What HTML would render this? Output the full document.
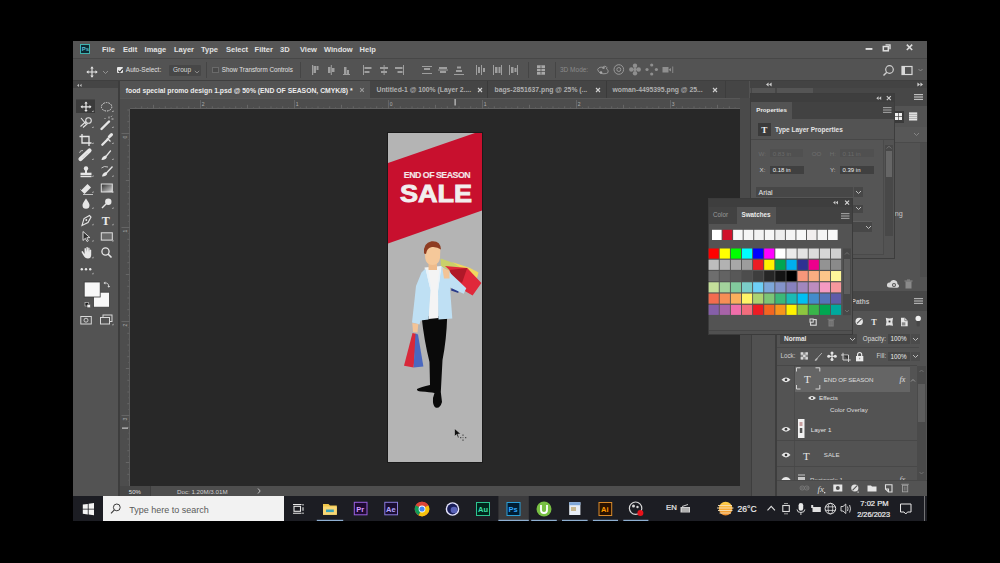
<!DOCTYPE html>
<html><head><meta charset="utf-8">
<style>
*{box-sizing:border-box;margin:0;padding:0}
html,body{width:1000px;height:563px;overflow:hidden;background:#000}
body{position:relative;font-family:"Liberation Sans",sans-serif;color:#e8e8e8}
.a{position:absolute}
.t{position:absolute;white-space:nowrap;line-height:1}
</style></head><body>
<!-- photoshop frame -->
<div class="a" style="left:73px;top:41px;width:854px;height:455px;background:#535353"></div>
<!-- menubar -->
<div class="a" style="left:73px;top:41px;width:854px;height:18px;background:#555"></div>
<div class="a" style="left:73px;top:58px;width:854px;height:1px;background:#474747"></div>
<!-- options bar -->
<div class="a" style="left:73px;top:59px;width:854px;height:21px;background:#535353"></div>
<div class="a" style="left:73px;top:80px;width:854px;height:1px;background:#3f3f3f"></div>
<!-- toolbar -->
<div class="a" style="left:73px;top:81px;width:45px;height:415px;background:#535353"></div>
<div class="a" style="left:73px;top:81px;width:45px;height:7px;background:#454545"></div>
<div class="a" style="left:118px;top:81px;width:2px;height:415px;background:#3d3d3d"></div>
<!-- doc tab bar -->
<div class="a" style="left:120px;top:81px;width:629px;height:17px;background:#454545"></div>
<div class="a" style="left:120px;top:81px;width:250px;height:17px;background:#535353"></div>
<!-- rulers -->
<div class="a" style="left:120px;top:98px;width:10px;height:11px;background:#4d4d4d"></div>
<svg class="a" style="left:120px;top:98px" width="620" height="11" viewBox="120 98 620 11">
<rect x="120" y="98" width="620" height="11" fill="#4d4d4d"/>
<rect x="120" y="98.2" width="620" height="0.8" fill="#5a5a5a"/>
<rect x="130" y="108.2" width="610" height="0.9" fill="#666"/>
<rect x="135.47" y="107" width="0.7" height="1.3" fill="#616161"/>
<rect x="141.35" y="106.3" width="0.8" height="2" fill="#6a6a6a"/>
<rect x="147.22" y="107" width="0.7" height="1.3" fill="#616161"/>
<rect x="153.10" y="104.8" width="0.8" height="3.5" fill="#6e6e6e"/>
<rect x="158.97" y="107" width="0.7" height="1.3" fill="#616161"/>
<rect x="164.85" y="106.3" width="0.8" height="2" fill="#6a6a6a"/>
<rect x="170.72" y="107" width="0.7" height="1.3" fill="#616161"/>
<rect x="176.60" y="106.3" width="0.8" height="2" fill="#6a6a6a"/>
<rect x="182.47" y="107" width="0.7" height="1.3" fill="#616161"/>
<rect x="188.35" y="106.3" width="0.8" height="2" fill="#6a6a6a"/>
<rect x="194.22" y="107" width="0.7" height="1.3" fill="#616161"/>
<rect x="200.10" y="100" width="0.8" height="8.5" fill="#6c6c6c"/>
<text x="201.70" y="106.3" font-size="5" fill="#b0b0b0" font-family="Liberation Sans">2</text>
<rect x="205.97" y="107" width="0.7" height="1.3" fill="#616161"/>
<rect x="211.85" y="106.3" width="0.8" height="2" fill="#6a6a6a"/>
<rect x="217.72" y="107" width="0.7" height="1.3" fill="#616161"/>
<rect x="223.60" y="106.3" width="0.8" height="2" fill="#6a6a6a"/>
<rect x="229.47" y="107" width="0.7" height="1.3" fill="#616161"/>
<rect x="235.35" y="106.3" width="0.8" height="2" fill="#6a6a6a"/>
<rect x="241.22" y="107" width="0.7" height="1.3" fill="#616161"/>
<rect x="247.10" y="104.8" width="0.8" height="3.5" fill="#6e6e6e"/>
<rect x="252.97" y="107" width="0.7" height="1.3" fill="#616161"/>
<rect x="258.85" y="106.3" width="0.8" height="2" fill="#6a6a6a"/>
<rect x="264.73" y="107" width="0.7" height="1.3" fill="#616161"/>
<rect x="270.60" y="106.3" width="0.8" height="2" fill="#6a6a6a"/>
<rect x="276.48" y="107" width="0.7" height="1.3" fill="#616161"/>
<rect x="282.35" y="106.3" width="0.8" height="2" fill="#6a6a6a"/>
<rect x="288.23" y="107" width="0.7" height="1.3" fill="#616161"/>
<rect x="294.10" y="100" width="0.8" height="8.5" fill="#6c6c6c"/>
<text x="295.70" y="106.3" font-size="5" fill="#b0b0b0" font-family="Liberation Sans">1</text>
<rect x="299.98" y="107" width="0.7" height="1.3" fill="#616161"/>
<rect x="305.85" y="106.3" width="0.8" height="2" fill="#6a6a6a"/>
<rect x="311.73" y="107" width="0.7" height="1.3" fill="#616161"/>
<rect x="317.60" y="106.3" width="0.8" height="2" fill="#6a6a6a"/>
<rect x="323.48" y="107" width="0.7" height="1.3" fill="#616161"/>
<rect x="329.35" y="106.3" width="0.8" height="2" fill="#6a6a6a"/>
<rect x="335.23" y="107" width="0.7" height="1.3" fill="#616161"/>
<rect x="341.10" y="104.8" width="0.8" height="3.5" fill="#6e6e6e"/>
<rect x="346.98" y="107" width="0.7" height="1.3" fill="#616161"/>
<rect x="352.85" y="106.3" width="0.8" height="2" fill="#6a6a6a"/>
<rect x="358.73" y="107" width="0.7" height="1.3" fill="#616161"/>
<rect x="364.60" y="106.3" width="0.8" height="2" fill="#6a6a6a"/>
<rect x="370.48" y="107" width="0.7" height="1.3" fill="#616161"/>
<rect x="376.35" y="106.3" width="0.8" height="2" fill="#6a6a6a"/>
<rect x="382.23" y="107" width="0.7" height="1.3" fill="#616161"/>
<rect x="388.10" y="100" width="0.8" height="8.5" fill="#6c6c6c"/>
<text x="389.70" y="106.3" font-size="5" fill="#b0b0b0" font-family="Liberation Sans">0</text>
<rect x="393.98" y="107" width="0.7" height="1.3" fill="#616161"/>
<rect x="399.85" y="106.3" width="0.8" height="2" fill="#6a6a6a"/>
<rect x="405.73" y="107" width="0.7" height="1.3" fill="#616161"/>
<rect x="411.60" y="106.3" width="0.8" height="2" fill="#6a6a6a"/>
<rect x="417.48" y="107" width="0.7" height="1.3" fill="#616161"/>
<rect x="423.35" y="106.3" width="0.8" height="2" fill="#6a6a6a"/>
<rect x="429.23" y="107" width="0.7" height="1.3" fill="#616161"/>
<rect x="435.10" y="104.8" width="0.8" height="3.5" fill="#6e6e6e"/>
<rect x="440.98" y="107" width="0.7" height="1.3" fill="#616161"/>
<rect x="446.85" y="106.3" width="0.8" height="2" fill="#6a6a6a"/>
<rect x="452.73" y="107" width="0.7" height="1.3" fill="#616161"/>
<rect x="458.60" y="106.3" width="0.8" height="2" fill="#6a6a6a"/>
<rect x="464.48" y="107" width="0.7" height="1.3" fill="#616161"/>
<rect x="470.35" y="106.3" width="0.8" height="2" fill="#6a6a6a"/>
<rect x="476.23" y="107" width="0.7" height="1.3" fill="#616161"/>
<rect x="482.10" y="100" width="0.8" height="8.5" fill="#6c6c6c"/>
<text x="483.70" y="106.3" font-size="5" fill="#b0b0b0" font-family="Liberation Sans">1</text>
<rect x="487.98" y="107" width="0.7" height="1.3" fill="#616161"/>
<rect x="493.85" y="106.3" width="0.8" height="2" fill="#6a6a6a"/>
<rect x="499.73" y="107" width="0.7" height="1.3" fill="#616161"/>
<rect x="505.60" y="106.3" width="0.8" height="2" fill="#6a6a6a"/>
<rect x="511.48" y="107" width="0.7" height="1.3" fill="#616161"/>
<rect x="517.35" y="106.3" width="0.8" height="2" fill="#6a6a6a"/>
<rect x="523.23" y="107" width="0.7" height="1.3" fill="#616161"/>
<rect x="529.10" y="104.8" width="0.8" height="3.5" fill="#6e6e6e"/>
<rect x="534.98" y="107" width="0.7" height="1.3" fill="#616161"/>
<rect x="540.85" y="106.3" width="0.8" height="2" fill="#6a6a6a"/>
<rect x="546.73" y="107" width="0.7" height="1.3" fill="#616161"/>
<rect x="552.60" y="106.3" width="0.8" height="2" fill="#6a6a6a"/>
<rect x="558.48" y="107" width="0.7" height="1.3" fill="#616161"/>
<rect x="564.35" y="106.3" width="0.8" height="2" fill="#6a6a6a"/>
<rect x="570.23" y="107" width="0.7" height="1.3" fill="#616161"/>
<rect x="576.10" y="100" width="0.8" height="8.5" fill="#6c6c6c"/>
<text x="577.70" y="106.3" font-size="5" fill="#b0b0b0" font-family="Liberation Sans">2</text>
<rect x="581.98" y="107" width="0.7" height="1.3" fill="#616161"/>
<rect x="587.85" y="106.3" width="0.8" height="2" fill="#6a6a6a"/>
<rect x="593.73" y="107" width="0.7" height="1.3" fill="#616161"/>
<rect x="599.60" y="106.3" width="0.8" height="2" fill="#6a6a6a"/>
<rect x="605.48" y="107" width="0.7" height="1.3" fill="#616161"/>
<rect x="611.35" y="106.3" width="0.8" height="2" fill="#6a6a6a"/>
<rect x="617.23" y="107" width="0.7" height="1.3" fill="#616161"/>
<rect x="623.10" y="104.8" width="0.8" height="3.5" fill="#6e6e6e"/>
<rect x="628.98" y="107" width="0.7" height="1.3" fill="#616161"/>
<rect x="634.85" y="106.3" width="0.8" height="2" fill="#6a6a6a"/>
<rect x="640.73" y="107" width="0.7" height="1.3" fill="#616161"/>
<rect x="646.60" y="106.3" width="0.8" height="2" fill="#6a6a6a"/>
<rect x="652.48" y="107" width="0.7" height="1.3" fill="#616161"/>
<rect x="658.35" y="106.3" width="0.8" height="2" fill="#6a6a6a"/>
<rect x="664.23" y="107" width="0.7" height="1.3" fill="#616161"/>
<rect x="670.10" y="100" width="0.8" height="8.5" fill="#6c6c6c"/>
<text x="671.70" y="106.3" font-size="5" fill="#b0b0b0" font-family="Liberation Sans">3</text>
<rect x="675.98" y="107" width="0.7" height="1.3" fill="#616161"/>
<rect x="681.85" y="106.3" width="0.8" height="2" fill="#6a6a6a"/>
<rect x="687.73" y="107" width="0.7" height="1.3" fill="#616161"/>
<rect x="693.60" y="106.3" width="0.8" height="2" fill="#6a6a6a"/>
<rect x="699.48" y="107" width="0.7" height="1.3" fill="#616161"/>
<rect x="705.35" y="106.3" width="0.8" height="2" fill="#6a6a6a"/>
<rect x="711.23" y="107" width="0.7" height="1.3" fill="#616161"/>
<rect x="717.10" y="104.8" width="0.8" height="3.5" fill="#6e6e6e"/>
<rect x="722.98" y="107" width="0.7" height="1.3" fill="#616161"/>
<rect x="728.85" y="106.3" width="0.8" height="2" fill="#6a6a6a"/>
<rect x="734.73" y="107" width="0.7" height="1.3" fill="#616161"/>
<rect x="454.6" y="99" width="1" height="6.5" fill="#e0e0e0"/>
</svg>
<svg class="a" style="left:120px;top:109px" width="10" height="377" viewBox="120 109 10 377">
<rect x="120" y="109" width="10" height="377" fill="#4d4d4d"/>
<rect x="129.2" y="109" width="0.8" height="377" fill="#636363"/>
<rect x="127.3" y="109.60" width="2" height="0.8" fill="#6a6a6a"/>
<rect x="128" y="115.53" width="1.3" height="0.7" fill="#616161"/>
<rect x="127.3" y="121.35" width="2" height="0.8" fill="#6a6a6a"/>
<rect x="128" y="127.28" width="1.3" height="0.7" fill="#616161"/>
<rect x="121.5" y="133.10" width="8" height="0.8" fill="#6c6c6c"/>
<text x="0" y="0" font-size="5" fill="#b0b0b0" font-family="Liberation Sans" transform="translate(126.5 135.50) rotate(-90) translate(-3 0)">0</text>
<rect x="128" y="139.03" width="1.3" height="0.7" fill="#616161"/>
<rect x="127.3" y="144.85" width="2" height="0.8" fill="#6a6a6a"/>
<rect x="128" y="150.78" width="1.3" height="0.7" fill="#616161"/>
<rect x="127.3" y="156.60" width="2" height="0.8" fill="#6a6a6a"/>
<rect x="128" y="162.53" width="1.3" height="0.7" fill="#616161"/>
<rect x="127.3" y="168.35" width="2" height="0.8" fill="#6a6a6a"/>
<rect x="128" y="174.28" width="1.3" height="0.7" fill="#616161"/>
<rect x="125.8" y="180.10" width="3.5" height="0.8" fill="#6e6e6e"/>
<rect x="128" y="186.03" width="1.3" height="0.7" fill="#616161"/>
<rect x="127.3" y="191.85" width="2" height="0.8" fill="#6a6a6a"/>
<rect x="128" y="197.78" width="1.3" height="0.7" fill="#616161"/>
<rect x="127.3" y="203.60" width="2" height="0.8" fill="#6a6a6a"/>
<rect x="128" y="209.53" width="1.3" height="0.7" fill="#616161"/>
<rect x="127.3" y="215.35" width="2" height="0.8" fill="#6a6a6a"/>
<rect x="128" y="221.28" width="1.3" height="0.7" fill="#616161"/>
<rect x="121.5" y="227.10" width="8" height="0.8" fill="#6c6c6c"/>
<text x="0" y="0" font-size="5" fill="#b0b0b0" font-family="Liberation Sans" transform="translate(126.5 229.50) rotate(-90) translate(-3 0)">1</text>
<rect x="128" y="233.03" width="1.3" height="0.7" fill="#616161"/>
<rect x="127.3" y="238.85" width="2" height="0.8" fill="#6a6a6a"/>
<rect x="128" y="244.78" width="1.3" height="0.7" fill="#616161"/>
<rect x="127.3" y="250.60" width="2" height="0.8" fill="#6a6a6a"/>
<rect x="128" y="256.52" width="1.3" height="0.7" fill="#616161"/>
<rect x="127.3" y="262.35" width="2" height="0.8" fill="#6a6a6a"/>
<rect x="128" y="268.27" width="1.3" height="0.7" fill="#616161"/>
<rect x="125.8" y="274.10" width="3.5" height="0.8" fill="#6e6e6e"/>
<rect x="128" y="280.02" width="1.3" height="0.7" fill="#616161"/>
<rect x="127.3" y="285.85" width="2" height="0.8" fill="#6a6a6a"/>
<rect x="128" y="291.77" width="1.3" height="0.7" fill="#616161"/>
<rect x="127.3" y="297.60" width="2" height="0.8" fill="#6a6a6a"/>
<rect x="128" y="303.52" width="1.3" height="0.7" fill="#616161"/>
<rect x="127.3" y="309.35" width="2" height="0.8" fill="#6a6a6a"/>
<rect x="128" y="315.27" width="1.3" height="0.7" fill="#616161"/>
<rect x="121.5" y="321.10" width="8" height="0.8" fill="#6c6c6c"/>
<text x="0" y="0" font-size="5" fill="#b0b0b0" font-family="Liberation Sans" transform="translate(126.5 323.50) rotate(-90) translate(-3 0)">2</text>
<rect x="128" y="327.02" width="1.3" height="0.7" fill="#616161"/>
<rect x="127.3" y="332.85" width="2" height="0.8" fill="#6a6a6a"/>
<rect x="128" y="338.77" width="1.3" height="0.7" fill="#616161"/>
<rect x="127.3" y="344.60" width="2" height="0.8" fill="#6a6a6a"/>
<rect x="128" y="350.52" width="1.3" height="0.7" fill="#616161"/>
<rect x="127.3" y="356.35" width="2" height="0.8" fill="#6a6a6a"/>
<rect x="128" y="362.27" width="1.3" height="0.7" fill="#616161"/>
<rect x="125.8" y="368.10" width="3.5" height="0.8" fill="#6e6e6e"/>
<rect x="128" y="374.02" width="1.3" height="0.7" fill="#616161"/>
<rect x="127.3" y="379.85" width="2" height="0.8" fill="#6a6a6a"/>
<rect x="128" y="385.77" width="1.3" height="0.7" fill="#616161"/>
<rect x="127.3" y="391.60" width="2" height="0.8" fill="#6a6a6a"/>
<rect x="128" y="397.52" width="1.3" height="0.7" fill="#616161"/>
<rect x="127.3" y="403.35" width="2" height="0.8" fill="#6a6a6a"/>
<rect x="128" y="409.27" width="1.3" height="0.7" fill="#616161"/>
<rect x="121.5" y="415.10" width="8" height="0.8" fill="#6c6c6c"/>
<text x="0" y="0" font-size="5" fill="#b0b0b0" font-family="Liberation Sans" transform="translate(126.5 417.50) rotate(-90) translate(-3 0)">3</text>
<rect x="128" y="421.02" width="1.3" height="0.7" fill="#616161"/>
<rect x="127.3" y="426.85" width="2" height="0.8" fill="#6a6a6a"/>
<rect x="128" y="432.77" width="1.3" height="0.7" fill="#616161"/>
<rect x="127.3" y="438.60" width="2" height="0.8" fill="#6a6a6a"/>
<rect x="128" y="444.52" width="1.3" height="0.7" fill="#616161"/>
<rect x="127.3" y="450.35" width="2" height="0.8" fill="#6a6a6a"/>
<rect x="128" y="456.27" width="1.3" height="0.7" fill="#616161"/>
<rect x="125.8" y="462.10" width="3.5" height="0.8" fill="#6e6e6e"/>
<rect x="128" y="468.02" width="1.3" height="0.7" fill="#616161"/>
<rect x="127.3" y="473.85" width="2" height="0.8" fill="#6a6a6a"/>
<rect x="128" y="479.77" width="1.3" height="0.7" fill="#616161"/>
<rect x="122" y="427.6" width="6" height="1" fill="#e0e0e0"/>
</svg>
<!-- pasteboard -->
<div class="a" style="left:130px;top:109px;width:610px;height:377px;background:#282828"></div>
<!-- vertical scrollbar -->
<div class="a" style="left:740px;top:98px;width:11px;height:398px;background:#4a4a4a"></div>
<!-- status bar -->
<div class="a" style="left:120px;top:486px;width:620px;height:10px;background:#4e4e4e"></div>
<div class="a" style="left:120px;top:486px;width:30px;height:10px;background:#474747"></div>
<!-- dock column -->
<div class="a" style="left:751px;top:81px;width:176px;height:415px;background:#535353"></div>
<div class="a" style="left:751px;top:290px;width:25px;height:206px;background:#515151;border-left:1px solid #3e3e3e;border-right:1px solid #3e3e3e"></div>

<!-- ===== MENUBAR CONTENT ===== -->
<div class="a" style="left:80px;top:44.4px;width:10px;height:9.4px;background:#0b2a33;border:1px solid #3fb3b0"></div>
<div class="t" style="left:81.7px;top:46.1px;font-size:6px;font-weight:bold;color:#5cc0d8">Ps</div>
<div class="t" style="left:102.0px;top:46.4px;font-size:7.5px;font-weight:bold;color:#e2e2e2">File</div>
<div class="t" style="left:123.0px;top:46.4px;font-size:7.5px;font-weight:bold;color:#e2e2e2">Edit</div>
<div class="t" style="left:144.6px;top:46.4px;font-size:7.5px;font-weight:bold;color:#e2e2e2">Image</div>
<div class="t" style="left:174.0px;top:46.4px;font-size:7.5px;font-weight:bold;color:#e2e2e2">Layer</div>
<div class="t" style="left:201.0px;top:46.4px;font-size:7.5px;font-weight:bold;color:#e2e2e2">Type</div>
<div class="t" style="left:226.0px;top:46.4px;font-size:7.5px;font-weight:bold;color:#e2e2e2">Select</div>
<div class="t" style="left:254.6px;top:46.4px;font-size:7.5px;font-weight:bold;color:#e2e2e2">Filter</div>
<div class="t" style="left:280.0px;top:46.4px;font-size:7.5px;font-weight:bold;color:#e2e2e2">3D</div>
<div class="t" style="left:300.0px;top:46.4px;font-size:7.5px;font-weight:bold;color:#e2e2e2">View</div>
<div class="t" style="left:324.0px;top:46.4px;font-size:7.5px;font-weight:bold;color:#e2e2e2">Window</div>
<div class="t" style="left:359.6px;top:46.4px;font-size:7.5px;font-weight:bold;color:#e2e2e2">Help</div>
<svg class="a" style="left:860px;top:41px" width="67" height="18" viewBox="860 41 67 18">
  <rect x="865.6" y="48" width="6.8" height="1.9" fill="#dedede"/>
  <rect x="883.3" y="46.5" width="5" height="4.3" fill="none" stroke="#dedede" stroke-width="1.5"/>
  <path d="M885.5 44.9 H890 V49.2" fill="none" stroke="#dedede" stroke-width="1.4"/>
  <path d="M906.8 44.6 L912.2 50 M912.2 44.6 L906.8 50" stroke="#dedede" stroke-width="1.5"/>
</svg>
<!-- ===== OPTIONS BAR CONTENT ===== -->
<svg class="a" style="left:86px;top:65.5px" width="12" height="12" viewBox="0 0 12 12">
  <path d="M6 1.5 V10.5 M1.5 6 H10.5" stroke="#e6e6e6" stroke-width="1.1"/>
  <path d="M6 0.3 L4.3 2.5 H7.7 Z M6 11.7 L4.3 9.5 H7.7 Z M0.3 6 L2.5 4.3 V7.7 Z M11.7 6 L9.5 4.3 V7.7 Z" fill="#e6e6e6"/>
</svg>
<svg class="a" style="left:102px;top:69.5px" width="7" height="5" viewBox="0 0 7 5"><path d="M1 1 L3.5 3.5 L6 1" fill="none" stroke="#9a9a9a" stroke-width="0.9"/></svg>
<div class="a" style="left:116.5px;top:66.5px;width:6.5px;height:6.5px;background:#e8e8e8;border-radius:1px"></div>
<svg class="a" style="left:116.5px;top:66.5px" width="7" height="7" viewBox="0 0 7 7"><path d="M1.3 3.6 L2.9 5.2 L5.8 1.6" fill="none" stroke="#333" stroke-width="1.2"/></svg>
<div class="t" style="left:125.8px;top:67.4px;font-size:6.5px;color:#e0e0e0">Auto-Select:</div>
<div class="a" style="left:169px;top:65.2px;width:32px;height:10.4px;background:#474747;border-radius:1px"></div>
<div class="t" style="left:173px;top:67.3px;font-size:6.5px;color:#d8d8d8">Group</div>
<svg class="a" style="left:193.5px;top:69.5px" width="6" height="4" viewBox="0 0 6 4"><path d="M0.8 0.8 L3 3 L5.2 0.8" fill="none" stroke="#9a9a9a" stroke-width="0.8"/></svg>
<div class="a" style="left:206.3px;top:62px;width:1px;height:16px;background:#454545"></div>
<div class="a" style="left:212.3px;top:67px;width:6.3px;height:6.3px;border:1px solid #6a6a6a;background:#4a4a4a"></div>
<div class="t" style="left:221.8px;top:67.2px;font-size:6.3px;color:#e0e0e0">Show Transform Controls</div>
<div class="a" style="left:300px;top:62px;width:1px;height:16px;background:#454545"></div>
<svg class="a" style="left:305px;top:63px" width="380" height="14" viewBox="305 63 380 14" fill="#9e9e9e">
  <!-- align top/vcenter/bottom -->
  <rect x="312" y="65" width="1.2" height="10"/><rect x="313.5" y="66" width="2.5" height="7"/><rect x="316.5" y="66" width="2" height="4"/>
  <rect x="328" y="67" width="2.5" height="6"/><rect x="330.8" y="65" width="1" height="10"/><rect x="332" y="68" width="2.5" height="4"/>
  <rect x="344" y="67" width="2.5" height="7"/><rect x="347" y="70" width="2" height="4"/><rect x="343" y="74" width="7" height="1"/>
  <rect x="363" y="65" width="1" height="10"/><rect x="364.5" y="67" width="7" height="2"/><rect x="364.5" y="71" width="5" height="2"/>
  <rect x="383.6" y="65" width="1" height="10"/><rect x="380" y="67" width="8" height="2"/><rect x="381" y="71" width="6" height="2"/>
  <rect x="403" y="65" width="1" height="10"/><rect x="395" y="67" width="7.5" height="2"/><rect x="397.5" y="71" width="5" height="2"/>
  <rect x="422" y="66" width="10" height="1"/><rect x="424" y="68" width="6" height="2"/><rect x="422" y="73" width="10" height="1"/>
  <rect x="438" y="69.5" width="10" height="1"/><rect x="439" y="67" width="8" height="2"/><rect x="440" y="71" width="6" height="2"/>
  <rect x="454" y="74" width="10" height="1"/><rect x="456" y="70" width="6" height="2"/><rect x="457" y="66.5" width="4" height="2"/>
  <rect x="476" y="65" width="1" height="10"/><rect x="478" y="67" width="2" height="6"/><rect x="481" y="65" width="1" height="10"/><rect x="483" y="68" width="2" height="4"/>
  <rect x="493" y="65" width="1" height="10"/><rect x="495" y="67" width="2.5" height="6"/><rect x="498.5" y="67" width="2" height="6"/><rect x="501" y="65" width="1" height="10"/>
  <rect x="509" y="65" width="1" height="10"/><rect x="511" y="67" width="2.5" height="6"/><rect x="514.5" y="68" width="2" height="4"/><rect x="517" y="65" width="1" height="10"/>
  <rect x="537" y="65.5" width="8" height="9"/>
</svg>
<div class="a" style="left:528px;top:62px;width:1px;height:16px;background:#454545"></div>
<div class="a" style="left:555px;top:62px;width:1px;height:16px;background:#454545"></div>
<svg class="a" style="left:536px;top:65px" width="10" height="10" viewBox="0 0 10 10"><rect x="1" y="0.5" width="8" height="9" fill="#a8a8a8"/><path d="M1 3.5 H9 M1 6.5 H9 M5 0.5 V9.5" stroke="#535353" stroke-width="0.8"/></svg>
<div class="t" style="left:560px;top:66.5px;font-size:6.5px;color:#8a8a8a">3D Mode:</div>
<svg class="a" style="left:594px;top:63px" width="82" height="14" viewBox="594 63 82 14">
  <g fill="none" stroke="#999" stroke-width="1">
    <path d="M598.5 71.5 Q596.5 69 599 67.8 Q601 66.5 603 67.5 Q604 65.6 606 66.5 Q607.5 67.5 606.5 69 Q609 70 608 72.5 Q607 74 603 73.8 Q600 73.5 598.5 71.5 Z"/>
    <circle cx="618.8" cy="69.5" r="4.8"/><circle cx="618.8" cy="69.5" r="2"/>
  </g>
  <circle cx="601" cy="72.5" r="1.3" fill="#aaa"/><circle cx="603.5" cy="67.8" r="1.3" fill="#999"/>
  <g fill="#8f8f8f">
    <circle cx="635" cy="65.8" r="2.2"/><circle cx="635" cy="73.2" r="2.2"/><circle cx="631.3" cy="69.5" r="2.2"/><circle cx="638.7" cy="69.5" r="2.2"/><circle cx="635" cy="69.5" r="1.8"/>
    <circle cx="651.7" cy="65" r="1.6"/><circle cx="651.7" cy="74" r="1.6"/><circle cx="647" cy="69.5" r="1.6"/><circle cx="656.4" cy="69.5" r="1.6"/>
    <rect x="662.5" y="67" width="6" height="5.5"/><path d="M668.5 69.8 L671 68 V71.6 Z"/><rect x="672.3" y="66.5" width="0.9" height="6.5"/>
  </g>
</svg>
<svg class="a" style="left:882px;top:64px" width="45" height="14" viewBox="882 64 45 14">
  <circle cx="889.5" cy="69.5" r="3.8" fill="none" stroke="#cfcfcf" stroke-width="1.2"/>
  <path d="M886.8 72.2 L883.5 75.5" stroke="#cfcfcf" stroke-width="1.4"/>
  <rect x="902" y="66.5" width="10" height="8" fill="none" stroke="#d8d8d8" stroke-width="1.2"/>
  <rect x="902" y="66.5" width="3" height="8" fill="#d8d8d8"/>
  <path d="M918.5 69 L920.5 71 L922.5 69" fill="none" stroke="#9a9a9a" stroke-width="0.8"/>
</svg>
<!-- ===== DOC TABS ===== -->
<div class="t" style="left:125.8px;top:87.6px;font-size:6.8px;font-weight:bold;color:#ececec">food special promo design 1.psd @ 50% (END OF SEASON, CMYK/8) *</div>
<svg class="a" style="left:359px;top:87px" width="6" height="6" viewBox="0 0 6 6"><path d="M1.2 1.2 L4.8 4.8 M4.8 1.2 L1.2 4.8" stroke="#9a9a9a" stroke-width="1.1"/></svg>
<div class="t" style="left:376.5px;top:87.4px;font-size:6.8px;font-weight:bold;color:#b0b0b0">Untitled-1 @ 100% (Layer 2....</div>
<svg class="a" style="left:476.5px;top:86.5px" width="6" height="6" viewBox="0 0 6 6"><path d="M1 1 L5 5 M5 1 L1 5" stroke="#d0d0d0" stroke-width="1.1"/></svg>
<div class="a" style="left:487px;top:81px;width:1px;height:17px;background:#3a3a3a"></div>
<div class="t" style="left:494.5px;top:87.4px;font-size:6.8px;font-weight:bold;color:#b0b0b0">bags-2851637.png @ 25% (...</div>
<svg class="a" style="left:594.5px;top:86.5px" width="6" height="6" viewBox="0 0 6 6"><path d="M1 1 L5 5 M5 1 L1 5" stroke="#d0d0d0" stroke-width="1.1"/></svg>
<div class="a" style="left:606px;top:81px;width:1px;height:17px;background:#3a3a3a"></div>
<div class="t" style="left:612.5px;top:87.4px;font-size:6.8px;font-weight:bold;color:#b0b0b0">woman-4495395.png @ 25...</div>
<svg class="a" style="left:712px;top:86.5px" width="6" height="6" viewBox="0 0 6 6"><path d="M1 1 L5 5 M5 1 L1 5" stroke="#d0d0d0" stroke-width="1.1"/></svg>
<div class="a" style="left:724.5px;top:81px;width:1px;height:17px;background:#3d3d3d"></div>

<!-- ===== TOOLBAR ICONS ===== -->
<svg class="a" style="left:73px;top:81px" width="45" height="250" viewBox="73 81 45 250">
  <path d="M79 83.8 L77 85.4 L79 87 Z M81.6 83.8 L79.6 85.4 L81.6 87 Z" fill="#b8b8b8"/>
  <rect x="76" y="99.5" width="19" height="13.5" fill="#3b3b3b"/>
  <g fill="#e8e8e8" stroke="#e8e8e8">
    <path d="M86 102.5 V111 M81.5 106.8 H90.5" stroke-width="1.2"/>
    <path d="M86 101.5 L84.3 103.5 H87.7 Z M86 112 L84.3 110 H87.7 Z M80.5 106.8 L82.5 105.1 V108.5 Z M91.5 106.8 L89.5 105.1 V108.5 Z" stroke="none"/>
  </g>
  <ellipse cx="106.6" cy="106.8" rx="5.2" ry="4.2" fill="none" stroke="#dcdcdc" stroke-width="1" stroke-dasharray="1.6 1"/>
  <!-- tiny triangles -->
  <g fill="#bdbdbd">
    <path d="M93.5 110.3 V112 H91.8 Z M113.5 110.3 V112 H111.8 Z"/>
    <path d="M93.5 126.3 V128 H91.8 Z M113.5 126.3 V128 H111.8 Z"/>
    <path d="M93.5 142.3 V144 H91.8 Z M113.5 142.3 V144 H111.8 Z"/>
    <path d="M93.5 158.3 V160 H91.8 Z M113.5 158.3 V160 H111.8 Z"/>
    <path d="M93.5 175 V176.7 H91.8 Z M113.5 175 V176.7 H111.8 Z"/>
    <path d="M93.5 191 V192.7 H91.8 Z M113.5 191 V192.7 H111.8 Z"/>
    <path d="M93.5 207 V208.7 H91.8 Z M113.5 207 V208.7 H111.8 Z"/>
    <path d="M93.5 223.5 V225.2 H91.8 Z M113.5 223.5 V225.2 H111.8 Z"/>
    <path d="M93.5 239.8 V241.5 H91.8 Z M113.5 239.8 V241.5 H111.8 Z"/>
    <path d="M93.5 256.5 V258.2 H91.8 Z"/>
    <path d="M93.5 272.5 V274.2 H91.8 Z"/>
    <path d="M113.5 323.5 V325.2 H111.8 Z"/>
  </g>
  <!-- quick selection -->
  <g fill="none" stroke="#e0e0e0" stroke-width="1.1">
    <circle cx="88.5" cy="120.5" r="2.8"/>
    <path d="M81 118 L86 124 M80.5 126.5 L86 121.5 M83 127.5 L87.5 123.5"/>
  </g>
  <!-- magic wand -->
  <path d="M101.5 129 L109 121.5" stroke="#e6e6e6" stroke-width="2.4" stroke-linecap="round"/>
  <path d="M109 116.5 V118.5 M111.5 119 H113.5 M104.5 118 L105.5 119 M112 115.8 L111 116.8" stroke="#cfcfcf" stroke-width="0.9"/>
  <!-- crop -->
  <path d="M82 134 V143 H91.5 M79.5 136.5 H89 V146" fill="none" stroke="#e8e8e8" stroke-width="1.3"/>
  <!-- eyedropper -->
  <path d="M102.3 144.8 L108 139" stroke="#e6e6e6" stroke-width="2.3" stroke-linecap="round"/>
  <path d="M107 138 L110.5 141.5" stroke="#e6e6e6" stroke-width="1.3"/>
  <path d="M109.3 136.8 L111.5 134.6" stroke="#e6e6e6" stroke-width="3" stroke-linecap="round"/>
  <!-- healing band-aid -->
  <path d="M80.5 159 L89.5 150.5" stroke="#e6e6e6" stroke-width="4.2" stroke-linecap="round"/>
  <path d="M83 157.5 L87 153.5" stroke="#999" stroke-width="0.8" stroke-dasharray="0.8 0.8"/>
  <path d="M79.5 153 Q80 150 83 150.5" fill="none" stroke="#cfcfcf" stroke-width="0.8"/>
  <!-- brush -->
  <path d="M110.8 150.5 L105.5 157" stroke="#e6e6e6" stroke-width="1.2"/>
  <path d="M105.8 155.5 Q102 156 101.5 160 Q105.5 160.3 106.8 157.3 Z" fill="#e6e6e6"/>
  <!-- stamp -->
  <g fill="#e8e8e8"><circle cx="86" cy="168.5" r="2.2"/><rect x="85" y="169.5" width="2" height="3.5"/><rect x="80.5" y="172.7" width="11" height="2.6"/><rect x="80.5" y="176" width="11" height="1.2"/></g>
  <!-- history brush -->
  <path d="M112.5 166.5 L106 173.5" stroke="#e6e6e6" stroke-width="1.3"/>
  <path d="M106.3 172 Q102.5 172.5 102 176.5 Q106 176.8 107.3 173.8 Z" fill="#e6e6e6"/>
  <path d="M101.5 168 Q104 165.5 108 167" fill="none" stroke="#cfcfcf" stroke-width="0.9"/>
  <!-- eraser -->
  <path d="M81 190.5 L87.5 184 L91 187.5 L84.5 194 Z" fill="#e6e6e6"/>
  <path d="M80.5 189.5 L84 193 M83 194.5 H93" fill="none" stroke="#cfcfcf" stroke-width="0.9"/>
  <!-- gradient -->
  <defs><linearGradient id="gr" x1="0" y1="0" x2="1" y2="1"><stop offset="0" stop-color="#2a2a2a"/><stop offset="1" stop-color="#d8d8d8"/></linearGradient></defs>
  <rect x="101.3" y="184" width="11" height="8" fill="url(#gr)" stroke="#e0e0e0" stroke-width="1"/>
  <!-- blur drop -->
  <path d="M86 198.5 Q82.3 203.8 82.5 205.3 A3.5 3.5 0 0 0 89.5 205.3 Q89.7 203.8 86 198.5 Z" fill="#e6e6e6"/>
  <!-- dodge -->
  <circle cx="108.3" cy="201.8" r="3.2" fill="#e6e6e6"/>
  <path d="M106 204 L102 208" stroke="#e6e6e6" stroke-width="1.4"/>
  <!-- pen -->
  <path d="M82 225.5 L84 218.5 L89.5 215.5 L91 217 L88 222.5 Z" fill="none" stroke="#e6e6e6" stroke-width="1.1"/>
  <circle cx="86.3" cy="220" r="0.9" fill="#e6e6e6"/>
  <!-- type T -->
  <text x="101.8" y="224.8" font-family="Liberation Serif" font-weight="bold" font-size="12" fill="#eaeaea">T</text>
  <!-- path selection -->
  <path d="M83 231.5 L83 240.5 L85.3 238.3 L87 241.5 L88.3 240.8 L86.8 237.8 L89.8 237.5 Z" fill="#2e2e2e" stroke="#e6e6e6" stroke-width="0.9"/>
  <!-- rectangle -->
  <rect x="101.3" y="232.8" width="11" height="7.3" fill="#6a6a6a" stroke="#e0e0e0" stroke-width="1"/>
  <!-- hand -->
  <path d="M81.5 252 L83.5 255.5 Q85 258.5 88 258.5 Q91 258.5 91.2 255 L91.2 250 Q90.5 249.2 89.8 250 L89.8 252.5 L89.5 248 Q88.8 247.2 88.2 248 L88.2 252 L87.8 247.3 Q87 246.5 86.4 247.3 L86.5 252 L85.8 248.3 Q85 247.5 84.5 248.5 L84.6 254 L82.8 251.2 Q81.8 250.8 81.5 252 Z" fill="#e8e8e8"/>
  <!-- zoom -->
  <circle cx="105.5" cy="251.5" r="3.6" fill="none" stroke="#e6e6e6" stroke-width="1.3"/>
  <path d="M108 254 L111.5 257.5" stroke="#e6e6e6" stroke-width="1.6"/>
  <!-- dots -->
  <circle cx="81.8" cy="269.2" r="1.2" fill="#e6e6e6"/><circle cx="86" cy="269.2" r="1.2" fill="#e6e6e6"/><circle cx="90.2" cy="269.2" r="1.2" fill="#e6e6e6"/>
  <!-- colors -->
  <rect x="93.5" y="292.2" width="16" height="15" fill="#f7f7f7" stroke="#3a3a3a" stroke-width="0.8"/>
  <rect x="84.2" y="282" width="16" height="15" fill="#f7f7f7" stroke="#3a3a3a" stroke-width="0.8"/>
  <path d="M104.8 283 Q108.5 282.5 108.8 286.5" fill="none" stroke="#d8d8d8" stroke-width="0.9"/>
  <path d="M103.5 283 L105.3 281.6 V284.4 Z M108.8 287.8 L107.4 286 H110.2 Z" fill="#d8d8d8"/>
  <rect x="85" y="302.5" width="3.5" height="3.5" fill="#1e1e1e" stroke="#d0d0d0" stroke-width="0.6"/>
  <rect x="87" y="304.3" width="3.5" height="3.5" fill="#f0f0f0" stroke="#333" stroke-width="0.5"/>
  <!-- quick mask & screen mode -->
  <rect x="80.8" y="316.5" width="10.5" height="7.5" fill="none" stroke="#d8d8d8" stroke-width="1"/>
  <circle cx="86" cy="320.2" r="2" fill="none" stroke="#d8d8d8" stroke-width="0.9"/>
  <rect x="103" y="315" width="9" height="6.5" fill="#535353" stroke="#d8d8d8" stroke-width="1"/>
  <rect x="100.5" y="317.5" width="9" height="6.5" fill="#535353" stroke="#d8d8d8" stroke-width="1"/>
</svg>

<!-- ===== DOCK ===== -->
<div class="a" style="left:749.5px;top:81px;width:177.5px;height:7px;background:#434343"></div>
<svg class="a" style="left:765px;top:82px" width="8" height="5" viewBox="0 0 8 5"><path d="M3.6 0.6 L1 2.5 L3.6 4.4 Z M6.6 0.6 L4 2.5 L6.6 4.4 Z" fill="#d0d0d0"/></svg>
<svg class="a" style="left:916px;top:82px" width="8" height="5" viewBox="0 0 8 5"><path d="M1.4 0.6 L4 2.5 L1.4 4.4 Z M4.4 0.6 L7 2.5 L4.4 4.4 Z" fill="#d0d0d0"/></svg>
<!-- libraries panel (docked, mostly covered) -->
<div class="a" style="left:751px;top:88px;width:25px;height:8px;background:#474747"></div>
<div class="a" style="left:776px;top:88px;width:151px;height:17.6px;background:#474747"></div>
<div class="a" style="left:752px;top:88px;width:23px;height:4.6px;background:#555"></div>
<div class="a" style="left:777px;top:88px;width:36px;height:4.6px;background:#555"></div>
<svg class="a" style="left:913px;top:93px" width="12" height="8" viewBox="0 0 12 8"><rect x="1" y="1" width="9" height="1.2" fill="#c0c0c0"/><rect x="1" y="3.4" width="9" height="1.2" fill="#c0c0c0"/><rect x="1" y="5.8" width="9" height="1.2" fill="#c0c0c0"/></svg>
<div class="a" style="left:893.5px;top:110.5px;width:10px;height:12.8px;background:#3a3a3a"></div>
<svg class="a" style="left:893px;top:110px" width="30" height="14" viewBox="893 110 30 14">
  <rect x="895" y="113" width="3.2" height="3.2" fill="#f0f0f0"/><rect x="898.8" y="113" width="3.2" height="3.2" fill="#f0f0f0"/>
  <rect x="895" y="116.8" width="3.2" height="3.2" fill="#f0f0f0"/><rect x="898.8" y="116.8" width="3.2" height="3.2" fill="#f0f0f0"/>
  <rect x="909" y="112.4" width="8.2" height="8.1" fill="#e6e6e6"/>
  <path d="M909 114.4 H917.2 M909 116.4 H917.2 M909 118.4 H917.2" stroke="#8a8a8a" stroke-width="0.6"/>
</svg>
<div class="a" style="left:894px;top:127px;width:33px;height:15.5px;background:#575757;border-bottom:1px solid #4a4a4a"></div>
<svg class="a" style="left:913px;top:131.5px" width="7" height="5" viewBox="0 0 7 5"><path d="M1 1 L3.5 3.5 L6 1" fill="none" stroke="#8a8a8a" stroke-width="0.9"/></svg>
<div class="t" style="left:894.8px;top:209.5px;font-size:7.2px;color:#c4c4c4">ng</div>
<div class="a" style="left:920px;top:142.5px;width:6.5px;height:134px;background:#4d4d4d"></div>
<div class="a" style="left:776px;top:277px;width:151px;height:13.5px;background:#535353"></div>
<svg class="a" style="left:886px;top:278px" width="30" height="12" viewBox="886 278 30 12">
  <path d="M889.5 287.5 Q886.5 287.5 887 284.5 Q887.5 282 890 282.5 Q891 279.5 894 280 Q897.5 280.5 897.5 284 Q899.5 284.5 899 286.5 Q898.5 288 896.5 287.8 Z" fill="#d8d8d8"/>
  <circle cx="894" cy="285" r="2" fill="#535353"/><circle cx="894" cy="285" r="1" fill="#d8d8d8"/>
  <rect x="905.5" y="281.5" width="6" height="7" fill="#8a8a8a"/><rect x="904.5" y="280.5" width="8" height="1" fill="#8a8a8a"/><rect x="907" y="279.5" width="3" height="1" fill="#8a8a8a"/>
</svg>

<!-- properties floating panel -->
<div class="a" style="left:750px;top:93px;width:145px;height:166px;background:#535353;border:1px solid #3d3d3d"></div>
<div class="a" style="left:751px;top:93.5px;width:143px;height:8.5px;background:#3e3e3e"></div>
<svg class="a" style="left:874px;top:94.5px" width="20" height="7" viewBox="874 94.5 20 7">
  <path d="M878.6 95.8 L876.3 97.7 L878.6 99.6 Z M881.2 95.8 L878.9 97.7 L881.2 99.6 Z" fill="#c8c8c8"/>
  <path d="M886.8 95.7 L890.8 99.7 M890.8 95.7 L886.8 99.7" stroke="#d0d0d0" stroke-width="1.1"/>
</svg>
<div class="a" style="left:751px;top:102px;width:143px;height:16.7px;background:#424242"></div>
<div class="a" style="left:751px;top:102px;width:41px;height:16.7px;background:#535353"></div>
<div class="t" style="left:756.3px;top:106.7px;font-size:6.2px;font-weight:bold;color:#eeeeee">Properties</div>
<svg class="a" style="left:882px;top:106px" width="11" height="8" viewBox="0 0 11 8"><rect x="1" y="1" width="8.5" height="1.2" fill="#9a9a9a"/><rect x="1" y="3.4" width="8.5" height="1.2" fill="#9a9a9a"/><rect x="1" y="5.8" width="8.5" height="1.2" fill="#9a9a9a"/></svg>
<div class="a" style="left:757.7px;top:123.2px;width:13px;height:12.5px;background:#3a3a3a"></div>
<div class="t" style="left:761.2px;top:125.6px;font-size:9.2px;font-family:'Liberation Serif',serif;font-weight:bold;color:#f0f0f0">T</div>
<div class="t" style="left:775px;top:126.8px;font-size:6.5px;font-weight:bold;color:#e4e4e4">Type Layer Properties</div>
<div class="a" style="left:751px;top:139px;width:143px;height:1px;background:#474747"></div>
<div class="a" style="left:751px;top:140px;width:133px;height:114.5px;background:#555;border-right:1px solid #4a4a4a;border-bottom:1px solid #4a4a4a"></div>
<div class="t" style="left:758.5px;top:150.5px;font-size:6.2px;color:#6e6e6e">W:</div>
<div class="a" style="left:770.2px;top:149.2px;width:33.3px;height:7.5px;background:#505050"></div>
<div class="t" style="left:772.7px;top:150.7px;font-size:6.2px;color:#6a6a6a">0.83 in</div>
<div class="t" style="left:811.7px;top:150.5px;font-size:6.2px;color:#6e6e6e">OO</div>
<div class="t" style="left:829.7px;top:150.5px;font-size:6.2px;color:#6e6e6e">H:</div>
<div class="a" style="left:840.2px;top:149.2px;width:33.8px;height:7.5px;background:#505050"></div>
<div class="t" style="left:842.5px;top:150.7px;font-size:6.2px;color:#6a6a6a">0.11 in</div>
<div class="t" style="left:759.5px;top:167px;font-size:6.2px;color:#cfcfcf">X:</div>
<div class="a" style="left:770.2px;top:165.5px;width:33.5px;height:8px;background:#404040"></div>
<div class="t" style="left:772.7px;top:167.2px;font-size:6px;color:#f0f0f0">0.18 in</div>
<div class="t" style="left:830px;top:167px;font-size:6.2px;color:#cfcfcf">Y:</div>
<div class="a" style="left:840.2px;top:165.5px;width:34px;height:8px;background:#404040"></div>
<div class="t" style="left:842.5px;top:167.2px;font-size:6px;color:#f0f0f0">0.39 in</div>
<div class="a" style="left:885px;top:145px;width:8px;height:91px;background:#484848"></div>
<div class="a" style="left:886px;top:151px;width:6px;height:26px;background:#666"></div>
<svg class="a" style="left:885px;top:145px" width="8" height="5" viewBox="0 0 8 5"><path d="M1.5 3.5 L4 1.3 L6.5 3.5" fill="none" stroke="#777" stroke-width="0.8"/></svg>
<div class="a" style="left:756.4px;top:187.2px;width:106.3px;height:9.8px;background:#474747"></div>
<div class="a" style="left:852.9px;top:187.2px;width:1px;height:9.8px;background:#535353"></div>
<div class="t" style="left:758.6px;top:189.3px;font-size:7px;color:#e8e8e8">Arial</div>
<svg class="a" style="left:855px;top:189.5px" width="7" height="5" viewBox="0 0 7 5"><path d="M1 1 L3.5 3.5 L6 1" fill="none" stroke="#bdbdbd" stroke-width="1"/></svg>
<div class="a" style="left:756.4px;top:204.5px;width:106.3px;height:8.5px;background:#474747"></div>
<svg class="a" style="left:855px;top:206.3px" width="7" height="5" viewBox="0 0 7 5"><path d="M1 1 L3.5 3.5 L6 1" fill="none" stroke="#bdbdbd" stroke-width="1"/></svg>
<div class="a" style="left:820px;top:222px;width:52px;height:10px;background:#474747"></div>
<div class="a" style="left:852px;top:220.6px;width:20px;height:0.8px;background:#606060"></div>
<svg class="a" style="left:865px;top:224.5px" width="7" height="5" viewBox="0 0 7 5"><path d="M1 1 L3.5 3.5 L6 1" fill="none" stroke="#bdbdbd" stroke-width="1"/></svg>
<!-- layers panel -->
<div class="a" style="left:776px;top:290.5px;width:151px;height:205.5px;background:#535353;border-left:1px solid #3e3e3e"></div>
<div class="a" style="left:776px;top:290.5px;width:151px;height:20.5px;background:#474747"></div>
<div class="t" style="left:851.5px;top:298.6px;font-size:6.6px;font-weight:bold;color:#bdbdbd">Paths</div>
<svg class="a" style="left:913px;top:297px" width="12" height="8" viewBox="0 0 12 8"><rect x="1" y="1" width="9" height="1.2" fill="#b0b0b0"/><rect x="1" y="3.4" width="9" height="1.2" fill="#b0b0b0"/><rect x="1" y="5.8" width="9" height="1.2" fill="#b0b0b0"/></svg>
<svg class="a" style="left:852px;top:313px" width="75" height="17" viewBox="852 313 75 17">
  <circle cx="859.2" cy="321.4" r="3.7" fill="#e6e6e6"/>
  <path d="M857 323.3 L861.6 318.9" stroke="#535353" stroke-width="1.1"/>
  <path d="M856.3 322.3 A3.5 3.5 0 0 0 858.3 324.5 L857 323.3 Z" fill="#9a9a9a"/>
  <text x="871.2" y="324.6" font-family="Liberation Serif" font-weight="bold" font-size="8.2" fill="#ececec">T</text>
  <path d="M885.8 317.8 Q889.4 319 893 317.8 Q891.8 321.8 893 325.8 Q889.4 324.6 885.8 325.8 Q887 321.8 885.8 317.8 Z" fill="#e2e2e2"/>
  <rect x="888.6" y="320.6" width="1.8" height="1.8" fill="#333"/>
  <path d="M901 317.8 H904.8 L907.7 320.7 V326.2 H901 Z" fill="#e6e6e6"/>
  <rect x="901.8" y="322.3" width="3.6" height="3.2" fill="#8a8a8a"/>
  <path d="M904.8 317.8 V320.7 H907.7" fill="none" stroke="#535353" stroke-width="0.6"/>
  <rect x="916.6" y="318.5" width="3.2" height="8" rx="1.6" fill="#474747"/>
  <circle cx="918.2" cy="318.4" r="2.7" fill="#f0f0f0"/>
</svg>
<div class="a" style="left:777px;top:331px;width:150px;height:16px;background:#535353"></div>
<div class="a" style="left:780.4px;top:334.4px;width:77px;height:9.6px;background:#474747"></div>
<div class="t" style="left:784px;top:336.3px;font-size:6.5px;font-weight:bold;color:#e8e8e8">Normal</div>
<svg class="a" style="left:849px;top:337px" width="7" height="5" viewBox="0 0 7 5"><path d="M1 1 L3.5 3.5 L6 1" fill="none" stroke="#bdbdbd" stroke-width="1"/></svg>
<div class="t" style="left:862.8px;top:336.3px;font-size:6.3px;color:#dcdcdc">Opacity:</div>
<div class="a" style="left:888.4px;top:334.4px;width:21.6px;height:9.6px;background:#474747"></div>
<div class="a" style="left:910.5px;top:334.4px;width:9.5px;height:9.6px;background:#4b4b4b"></div>
<div class="t" style="left:890.5px;top:336.3px;font-size:6.3px;color:#eeeeee">100%</div>
<svg class="a" style="left:912px;top:337px" width="7" height="5" viewBox="0 0 7 5"><path d="M1 1 L3.5 3.5 L6 1" fill="none" stroke="#bdbdbd" stroke-width="1"/></svg>
<div class="a" style="left:777px;top:347px;width:142px;height:0.8px;background:#484848"></div>
<div class="t" style="left:780.4px;top:353.3px;font-size:6.3px;color:#cfcfcf">Lock:</div>
<svg class="a" style="left:799px;top:350px" width="70" height="14" viewBox="799 350 70 14">
  <rect x="800.7" y="352.3" width="7.2" height="7.2" fill="#8a8a8a"/>
  <g fill="#d8d8d8"><rect x="800.7" y="352.3" width="2.4" height="2.4"/><rect x="805.5" y="352.3" width="2.4" height="2.4"/><rect x="803.1" y="354.7" width="2.4" height="2.4"/><rect x="800.7" y="357.1" width="2.4" height="2.4"/><rect x="805.5" y="357.1" width="2.4" height="2.4"/></g>
  <path d="M821.9 353 L816.5 359" stroke="#b8b8b8" stroke-width="0.9"/>
  <path d="M817.2 358 Q814.6 358.8 814.7 361 Q817 361 817.8 358.8 Z" fill="#b8b8b8"/>
  <g fill="#e4e4e4">
    <circle cx="832" cy="353" r="1.5"/><circle cx="832" cy="359.6" r="1.5"/><circle cx="828.7" cy="356.3" r="1.5"/><circle cx="835.3" cy="356.3" r="1.5"/>
    <rect x="831.4" y="353" width="1.2" height="6.6"/><rect x="828.7" y="355.7" width="6.6" height="1.2"/>
  </g>
  <path d="M843 352.8 V360 H850.7 M841 355 H848.5 V362" fill="none" stroke="#dcdcdc" stroke-width="0.9"/>
  <path d="M843.5 355.5 L848 359 L848 355.5 Z" fill="#333"/>
  <rect x="856" y="356" width="7.3" height="5.3" fill="#ececec"/>
  <path d="M857.6 356 V354.6 A2 2 0 0 1 861.7 354.6 V356" fill="none" stroke="#ececec" stroke-width="1.1"/>
  <rect x="859.2" y="357.8" width="1" height="1.5" fill="#888"/>
</svg>
<div class="t" style="left:876.4px;top:353.3px;font-size:6.3px;color:#cfcfcf">Fill:</div>
<div class="a" style="left:888.4px;top:351.6px;width:21.6px;height:9.6px;background:#474747"></div>
<div class="a" style="left:910.5px;top:351.6px;width:9.5px;height:9.6px;background:#4b4b4b"></div>
<div class="t" style="left:890.5px;top:353.5px;font-size:6.3px;color:#eeeeee">100%</div>
<svg class="a" style="left:912px;top:354.2px" width="7" height="5" viewBox="0 0 7 5"><path d="M1 1 L3.5 3.5 L6 1" fill="none" stroke="#bdbdbd" stroke-width="1"/></svg>
<div class="a" style="left:777px;top:365px;width:140px;height:0.8px;background:#474747"></div>
<!-- layer rows -->
<div class="a" style="left:777px;top:366px;width:140px;height:114px;background:#535353"></div>
<div class="a" style="left:794.5px;top:367px;width:115.5px;height:24.8px;background:#656565"></div>
<div class="a" style="left:794px;top:366px;width:0.8px;height:114px;background:#4a4a4a"></div>
<svg class="a" style="left:777px;top:366px" width="150" height="114" viewBox="777 366 150 114">
  <g fill="#e8e8e8">
    <path d="M781.5 379.8 Q786 375 790.5 379.8 Q786 384.6 781.5 379.8 Z"/>
    <path d="M781.5 429.3 Q786 424.5 790.5 429.3 Q786 434.1 781.5 429.3 Z"/>
    <path d="M781.5 455 Q786 450.2 790.5 455 Q786 459.8 781.5 455 Z"/>
    <path d="M781.5 479.5 Q786 474.7 790.5 479.5 Q786 484.3 781.5 479.5 Z"/>
    <path d="M808 398 Q812 394 816 398 Q812 402 808 398 Z"/>
  </g>
  <g fill="#353535"><circle cx="786" cy="379.8" r="1.3"/><circle cx="786" cy="429.3" r="1.3"/><circle cx="786" cy="455" r="1.3"/><circle cx="812" cy="398" r="1.1"/></g>
  <!-- dashed bracket thumb -->
  <path d="M796.5 371.5 V367.8 H800.5 M815.5 367.8 H819.8 V371.5 M819.8 385 V389 H815.5 M800.5 389 H796.5 V385" fill="none" stroke="#e0e0e0" stroke-width="0.9"/>
  <text x="804" y="383" font-family="Liberation Serif" font-size="11" fill="#e8e8e8">T</text>
  <text x="899.5" y="382.3" font-family="Liberation Serif" font-style="italic" font-size="8" fill="#e0e0e0">fx</text>
  <path d="M911 381.5 L913 379.5 L915 381.5" fill="none" stroke="#aaa" stroke-width="0.8"/>
  <!-- layer 1 thumb -->
  <rect x="798" y="419" width="6.5" height="19" fill="#f2f2f2"/>
  <rect x="799.5" y="422" width="3" height="4" fill="#c8a0a0"/><rect x="799.8" y="428" width="2.5" height="5" fill="#555"/>
  <rect x="777" y="440" width="140" height="0.8" fill="#474747"/>
  <rect x="777" y="466" width="140" height="0.8" fill="#474747"/>
  <text x="803" y="460" font-family="Liberation Serif" font-size="11" fill="#e8e8e8">T</text>
  <rect x="798" y="474.5" width="7" height="1" fill="#c8c8c8"/>
  <rect x="798" y="477" width="7" height="3" fill="#c8c8c8"/>
  <text x="899.5" y="482" font-family="Liberation Serif" font-style="italic" font-size="8" fill="#d0d0d0">fx</text>
</svg>
<div class="t" style="left:823.8px;top:377.3px;font-size:6.2px;color:#dedede;letter-spacing:-0.1px">END OF SEASON</div>
<div class="t" style="left:819px;top:395.3px;font-size:6.2px;color:#e6e6e6">Effects</div>
<div class="t" style="left:830px;top:406.8px;font-size:6.2px;color:#dedede">Color Overlay</div>
<div class="t" style="left:810.7px;top:426.5px;font-size:6.2px;color:#e6e6e6">Layer 1</div>
<div class="t" style="left:823.8px;top:452.3px;font-size:6.2px;color:#dedede">SALE</div>
<div class="t" style="left:810px;top:476.5px;font-size:6.2px;color:#cfcfcf">Rectangle 1</div>
<!-- layers scrollbar -->
<div class="a" style="left:917px;top:366px;width:9px;height:114px;background:#4a4a4a"></div>
<div class="a" style="left:918px;top:384px;width:7px;height:38px;background:#5d5d5d"></div>
<svg class="a" style="left:917px;top:367px" width="9" height="112" viewBox="0 0 9 112"><path d="M2.5 5 L4.5 3 L6.5 5 M2.5 105 L4.5 107 L6.5 105" fill="none" stroke="#777" stroke-width="0.8"/></svg>
<!-- layers bottom toolbar -->
<div class="a" style="left:777px;top:480px;width:150px;height:16px;background:#535353;border-top:1px solid #484848"></div>
<svg class="a" style="left:795px;top:481px" width="120" height="15" viewBox="795 481 120 15">
  <path d="M801 488 H803.5 M806 488 H808.5" stroke="#7a7a7a" stroke-width="1"/>
  <rect x="800" y="486" width="4.5" height="4" rx="2" fill="none" stroke="#7a7a7a" stroke-width="0.9"/><rect x="804.5" y="486" width="4.5" height="4" rx="2" fill="none" stroke="#7a7a7a" stroke-width="0.9"/>
  <text x="817.5" y="491.5" font-family="Liberation Serif" font-style="italic" font-size="9" fill="#dcdcdc">fx</text>
  <rect x="824" y="492" width="1.3" height="1.3" fill="#dcdcdc"/>
  <rect x="833.3" y="484.5" width="9" height="7" fill="#e6e6e6"/><circle cx="837.8" cy="488" r="2" fill="#535353"/>
  <circle cx="854.8" cy="488" r="3.6" fill="#e0e0e0"/><path d="M852.5 490.3 L857.1 485.7" stroke="#535353" stroke-width="1.1"/>
  <rect x="857.5" y="491.5" width="1.2" height="1.2" fill="#dcdcdc"/>
  <path d="M867.5 485.5 H871 L872 486.5 H876.5 V491.5 H867.5 Z" fill="#e6e6e6"/>
  <path d="M885.5 484.8 H892 V492 H888.5 L885.5 489 Z" fill="none" stroke="#e0e0e0" stroke-width="1.1"/><path d="M885.5 489 H888.5 V492" fill="none" stroke="#e0e0e0" stroke-width="1.1"/>
  <rect x="902.5" y="485.3" width="5.2" height="6.5" fill="none" stroke="#a0a0a0" stroke-width="0.9"/><rect x="901.3" y="483.8" width="7.5" height="0.9" fill="#a0a0a0"/><path d="M904.3 486.5 V490.5 M906 486.5 V490.5" stroke="#a0a0a0" stroke-width="0.6"/>
</svg>
<!-- swatches floating panel -->
<div class="a" style="left:707.5px;top:198px;width:145px;height:137px;background:#535353;border:1px solid #3b3b3b"></div>
<div class="a" style="left:708.5px;top:329.9px;width:143px;height:1.5px;background:#464646"></div>
<div class="a" style="left:708.5px;top:331.4px;width:143px;height:3px;background:#505050"></div>
<div class="a" style="left:708.5px;top:198.6px;width:143px;height:8.3px;background:#3e3e3e"></div>
<svg class="a" style="left:830px;top:199px" width="22" height="8" viewBox="830 199 22 8">
  <path d="M835.4 200.7 L833.1 202.6 L835.4 204.5 Z M838 200.7 L835.7 202.6 L838 204.5 Z" fill="#c8c8c8"/>
  <path d="M845.1 200.6 L849.1 204.6 M849.1 200.6 L845.1 204.6" stroke="#d8d8d8" stroke-width="1.1"/>
</svg>
<div class="a" style="left:708.5px;top:207px;width:143px;height:16.6px;background:#424242"></div>
<div class="a" style="left:737px;top:207px;width:39px;height:16.6px;background:#535353"></div>
<div class="t" style="left:713px;top:211.8px;font-size:6.3px;color:#9a9a9a">Color</div>
<div class="t" style="left:741.5px;top:211.8px;font-size:6.3px;font-weight:bold;color:#ececec">Swatches</div>
<svg class="a" style="left:840px;top:211.5px" width="11" height="8" viewBox="0 0 11 8"><rect x="1" y="1" width="8.5" height="1.2" fill="#9a9a9a"/><rect x="1" y="3.4" width="8.5" height="1.2" fill="#9a9a9a"/><rect x="1" y="5.8" width="8.5" height="1.2" fill="#9a9a9a"/></svg>
<svg class="a" style="left:708px;top:224px" width="144" height="107" viewBox="708 224 144 107">
<rect x="712.00" y="229.8" width="9.6" height="10.2" fill="#ffffff"/>
<rect x="722.55" y="229.8" width="9.6" height="10.2" fill="#d0102a"/>
<rect x="733.10" y="229.8" width="9.6" height="10.2" fill="#f7f7f7"/>
<rect x="743.65" y="229.8" width="9.6" height="10.2" fill="#f5f5f5"/>
<rect x="754.20" y="229.8" width="9.6" height="10.2" fill="#f3f3f3"/>
<rect x="764.75" y="229.8" width="9.6" height="10.2" fill="#f6f6f6"/>
<rect x="775.30" y="229.8" width="9.6" height="10.2" fill="#eeeeee"/>
<rect x="785.85" y="229.8" width="9.6" height="10.2" fill="#f4f4f4"/>
<rect x="796.40" y="229.8" width="9.6" height="10.2" fill="#f8f8f8"/>
<rect x="806.95" y="229.8" width="9.6" height="10.2" fill="#f2efef"/>
<rect x="817.50" y="229.8" width="9.6" height="10.2" fill="#f5f5f5"/>
<rect x="828.05" y="229.8" width="9.6" height="10.2" fill="#f9f9f9"/>
<rect x="708.60" y="248.50" width="10.2" height="10.1" fill="#ff0000"/>
<rect x="719.72" y="248.50" width="10.2" height="10.1" fill="#ffff00"/>
<rect x="730.84" y="248.50" width="10.2" height="10.1" fill="#00ff00"/>
<rect x="741.96" y="248.50" width="10.2" height="10.1" fill="#00ffff"/>
<rect x="753.08" y="248.50" width="10.2" height="10.1" fill="#0000ff"/>
<rect x="764.20" y="248.50" width="10.2" height="10.1" fill="#ff00ff"/>
<rect x="775.32" y="248.50" width="10.2" height="10.1" fill="#ffffff"/>
<rect x="786.44" y="248.50" width="10.2" height="10.1" fill="#ebebeb"/>
<rect x="797.56" y="248.50" width="10.2" height="10.1" fill="#e3e3e3"/>
<rect x="808.68" y="248.50" width="10.2" height="10.1" fill="#dcdcdc"/>
<rect x="819.80" y="248.50" width="10.2" height="10.1" fill="#d6d6d6"/>
<rect x="830.92" y="248.50" width="10.2" height="10.1" fill="#cfcfcf"/>
<rect x="708.60" y="259.76" width="10.2" height="10.1" fill="#bdbdbd"/>
<rect x="719.72" y="259.76" width="10.2" height="10.1" fill="#b2b2b2"/>
<rect x="730.84" y="259.76" width="10.2" height="10.1" fill="#a8a8a8"/>
<rect x="741.96" y="259.76" width="10.2" height="10.1" fill="#9d9d9d"/>
<rect x="753.08" y="259.76" width="10.2" height="10.1" fill="#ed1c24"/>
<rect x="764.20" y="259.76" width="10.2" height="10.1" fill="#fff200"/>
<rect x="775.32" y="259.76" width="10.2" height="10.1" fill="#00a651"/>
<rect x="786.44" y="259.76" width="10.2" height="10.1" fill="#00aeef"/>
<rect x="797.56" y="259.76" width="10.2" height="10.1" fill="#2e3192"/>
<rect x="808.68" y="259.76" width="10.2" height="10.1" fill="#ec008c"/>
<rect x="819.80" y="259.76" width="10.2" height="10.1" fill="#939393"/>
<rect x="830.92" y="259.76" width="10.2" height="10.1" fill="#8a8a8a"/>
<rect x="708.60" y="271.02" width="10.2" height="10.1" fill="#6e6e6e"/>
<rect x="719.72" y="271.02" width="10.2" height="10.1" fill="#636363"/>
<rect x="730.84" y="271.02" width="10.2" height="10.1" fill="#585858"/>
<rect x="741.96" y="271.02" width="10.2" height="10.1" fill="#4d4d4d"/>
<rect x="753.08" y="271.02" width="10.2" height="10.1" fill="#3e3e3e"/>
<rect x="764.20" y="271.02" width="10.2" height="10.1" fill="#262626"/>
<rect x="775.32" y="271.02" width="10.2" height="10.1" fill="#141414"/>
<rect x="786.44" y="271.02" width="10.2" height="10.1" fill="#000000"/>
<rect x="797.56" y="271.02" width="10.2" height="10.1" fill="#f7977a"/>
<rect x="808.68" y="271.02" width="10.2" height="10.1" fill="#f9ad81"/>
<rect x="819.80" y="271.02" width="10.2" height="10.1" fill="#fdc68a"/>
<rect x="830.92" y="271.02" width="10.2" height="10.1" fill="#fff79a"/>
<rect x="708.60" y="282.28" width="10.2" height="10.1" fill="#c4df9b"/>
<rect x="719.72" y="282.28" width="10.2" height="10.1" fill="#a3d39c"/>
<rect x="730.84" y="282.28" width="10.2" height="10.1" fill="#82ca9d"/>
<rect x="741.96" y="282.28" width="10.2" height="10.1" fill="#7bcdc8"/>
<rect x="753.08" y="282.28" width="10.2" height="10.1" fill="#6ecff6"/>
<rect x="764.20" y="282.28" width="10.2" height="10.1" fill="#7da7d9"/>
<rect x="775.32" y="282.28" width="10.2" height="10.1" fill="#8393ca"/>
<rect x="786.44" y="282.28" width="10.2" height="10.1" fill="#8781bd"/>
<rect x="797.56" y="282.28" width="10.2" height="10.1" fill="#a187be"/>
<rect x="808.68" y="282.28" width="10.2" height="10.1" fill="#bd8cbf"/>
<rect x="819.80" y="282.28" width="10.2" height="10.1" fill="#f49ac2"/>
<rect x="830.92" y="282.28" width="10.2" height="10.1" fill="#f6989d"/>
<rect x="708.60" y="293.54" width="10.2" height="10.1" fill="#f26c4f"/>
<rect x="719.72" y="293.54" width="10.2" height="10.1" fill="#f68e55"/>
<rect x="730.84" y="293.54" width="10.2" height="10.1" fill="#fbaf5c"/>
<rect x="741.96" y="293.54" width="10.2" height="10.1" fill="#fff467"/>
<rect x="753.08" y="293.54" width="10.2" height="10.1" fill="#acd372"/>
<rect x="764.20" y="293.54" width="10.2" height="10.1" fill="#7cc576"/>
<rect x="775.32" y="293.54" width="10.2" height="10.1" fill="#3bb878"/>
<rect x="786.44" y="293.54" width="10.2" height="10.1" fill="#1abbb4"/>
<rect x="797.56" y="293.54" width="10.2" height="10.1" fill="#00bff3"/>
<rect x="808.68" y="293.54" width="10.2" height="10.1" fill="#438ccb"/>
<rect x="819.80" y="293.54" width="10.2" height="10.1" fill="#5574b9"/>
<rect x="830.92" y="293.54" width="10.2" height="10.1" fill="#605ca8"/>
<rect x="708.60" y="304.80" width="10.2" height="10.1" fill="#855fa8"/>
<rect x="719.72" y="304.80" width="10.2" height="10.1" fill="#a763a8"/>
<rect x="730.84" y="304.80" width="10.2" height="10.1" fill="#f06eaa"/>
<rect x="741.96" y="304.80" width="10.2" height="10.1" fill="#f26d7d"/>
<rect x="753.08" y="304.80" width="10.2" height="10.1" fill="#ed1c24"/>
<rect x="764.20" y="304.80" width="10.2" height="10.1" fill="#f26522"/>
<rect x="775.32" y="304.80" width="10.2" height="10.1" fill="#f7941d"/>
<rect x="786.44" y="304.80" width="10.2" height="10.1" fill="#fff200"/>
<rect x="797.56" y="304.80" width="10.2" height="10.1" fill="#8dc63f"/>
<rect x="808.68" y="304.80" width="10.2" height="10.1" fill="#39b54a"/>
<rect x="819.80" y="304.80" width="10.2" height="10.1" fill="#00a651"/>
<rect x="830.92" y="304.80" width="10.2" height="10.1" fill="#00a99d"/>
<rect x="843" y="248.6" width="8" height="66.5" fill="#484848"/>
<rect x="844" y="259" width="6" height="35" fill="#5e5e5e"/>
<path d="M845 254.5 L847 252.5 L849 254.5 M845 310 L847 312 L849 310" fill="none" stroke="#777" stroke-width="0.8"/>
<rect x="810.6" y="319.6" width="5.6" height="5.6" fill="none" stroke="#dcdcdc" stroke-width="1.1"/><rect x="810" y="319" width="3.2" height="3.2" fill="#535353" stroke="#dcdcdc" stroke-width="1"/>
<rect x="828.5" y="320" width="5.2" height="6.5" fill="#7e7e7e"/><rect x="827.6" y="318.8" width="7" height="0.9" fill="#7e7e7e"/><path d="M830.1 321 V325.5 M832.1 321 V325.5" stroke="#5e5e5e" stroke-width="0.6"/>
</svg>
<!-- design document -->
<div class="a" style="left:387px;top:132px;width:96px;height:331px;background:#1a1a1a"></div>
<div class="a" style="left:388px;top:133px;width:94px;height:329px;background:#b4b4b4;overflow:hidden">
  <svg width="94" height="329" viewBox="388 133 94 329" style="position:absolute;left:0;top:0">
    <polygon points="388,163 473.5,133.5 482,130.6 482,210.4 388,243.4" fill="#c8102e"/>
    <!-- bags over shoulder -->
    <polygon points="440.6,258.5 468,268 478,272.3 476,278 452,272 441,266" fill="#c9d06a"/>
    <polygon points="452,262 470,268 478.5,272.5 477,278" fill="#f0d860"/>
    <polygon points="445,266.1 467.2,267.9 481.4,283 472.6,295.4 460.1,288.3 449.4,270" fill="#e0283a"/>
    <polygon points="449.4,270 467.2,267.9 462,283 452,276" fill="#b01828"/>
    <polygon points="452.1,285.5 459,288.5 458.3,293 451,290.5" fill="#2a3a8a"/>
    <!-- left hand bags -->
    <polygon points="412.5,333 404,365.8 413.6,367.6 416.5,334" fill="#d8283a"/>
    <polygon points="415.5,333.5 418,334.5 423.4,366.6 413.6,367.6" fill="#4a68c0"/>
    <!-- pants -->
    <path d="M421.5,316 L447.2,316 Q446.5,340 442.5,360 L440.8,392 L442,402 Q440,409 435.5,407.5 Q432.5,406 433,398 L434.5,393 Q430,392 421,391.5 Q416.5,391 417,389 Q421,387 430,385 L429.5,362 Q424,340 421.5,316 Z" fill="#0a0a0a"/>
    <!-- shirt -->
    <polygon points="424.5,267.5 441.5,266 439,290 438.5,318 428.5,319 429.5,290" fill="#f4f4f4"/>
    <!-- jacket -->
    <path d="M421.5,272.5 L425.5,268.5 L430.5,290 L428.5,319.5 L420.5,320.5 L419.5,324.5 L412,322.5 L414.5,300 L416,286 Z" fill="#bfe0f4"/>
    <path d="M441.5,266.5 L449.4,272.3 L466.3,288.3 L463.7,293.7 L450,287.5 L452.3,318.6 L438.5,319.5 L438,291 Z" fill="#bfe0f4"/>
    <path d="M425.5,268.5 L428.5,270 L431,289 L430.5,290 Z" fill="#e8f3fa"/>
    <path d="M441.5,266.5 L438,291 L437.5,289 L439.5,268 Z" fill="#e8f3fa"/>
    <!-- hands -->
    <path d="M442.3,268 L449.4,270.5 L449.6,278.6 L444,278.5 Z" fill="#f3c497"/>
    <path d="M412.3,323 L418.3,324 L417.5,332.5 L413,332 Z" fill="#f3c497"/>
    <!-- neck face -->
    <rect x="428.5" y="259" width="8.5" height="11" fill="#eebb8c"/>
    <path d="M424.8,249 Q425,244 432,243.5 Q440,243.5 440.3,250 L440,258 Q439,265 432.5,265 Q426,265 425.2,258 Z" fill="#f5c89a"/>
    <!-- hair -->
    <path d="M424,253.5 Q423,243 431.5,241.3 Q440.5,240.5 441,249.5 Q437,246.5 432,247 Q427,247.5 426,254 Z" fill="#8e3c22"/>
  </svg>
  <div class="t" style="left:15.8px;top:38.4px;font-size:8.8px;font-weight:bold;letter-spacing:-0.5px;-webkit-text-stroke:0.15px #f4e6e8;color:#f4e6e8">END OF SEASON</div>
  <div class="t" style="left:11.8px;top:49.4px;font-size:24.6px;font-weight:bold;transform:scaleX(1.1);transform-origin:0 0;-webkit-text-stroke:0.9px #f2eeee;color:#f2eeee">SALE</div>
</div>

<svg class="a" style="left:450px;top:425px" width="20" height="20" viewBox="450 425 20 20">
  <path d="M454.5 428.5 L454.5 436.5 L456.5 434.6 L458 438 L459.2 437.5 L457.8 434.2 L460.8 434 Z" fill="#111" stroke="#d8d8d8" stroke-width="0.5"/>
  <g fill="#333"><rect x="462.5" y="434.5" width="1" height="1.3"/><rect x="462.5" y="439.5" width="1" height="1.3"/><rect x="460" y="437.2" width="1.3" height="1"/><rect x="465" y="437.2" width="1.3" height="1"/><rect x="462.6" y="437.3" width="0.8" height="0.8"/></g>
</svg>
<!-- taskbar -->
<div class="a" style="left:73px;top:496px;width:854px;height:25px;background:#1c1d23"></div>
<div class="a" style="left:103px;top:496px;width:181px;height:25px;background:#f2f2f2"></div>

<!-- ===== STATUS BAR TEXT ===== -->
<div class="a" style="left:149.5px;top:486px;width:0.8px;height:10px;background:#3e3e3e"></div>
<div class="t" style="left:128.8px;top:488.7px;font-size:6px;color:#e0e0e0">50%</div>
<div class="t" style="left:177px;top:488.7px;font-size:6.2px;color:#d0d0d0">Doc: 1.20M/3.01M</div>
<svg class="a" style="left:256px;top:487px" width="6" height="8" viewBox="0 0 6 8"><path d="M2 1.5 L4.2 4 L2 6.5" fill="none" stroke="#cfcfcf" stroke-width="0.9"/></svg>
<!-- ===== TASKBAR ICONS ===== -->
<svg class="a" style="left:73px;top:496px" width="854" height="25" viewBox="73 496 854 25">
  <g fill="#f4f4f4">
    <path d="M82.8 504.6 L87.8 503.9 V508.8 H82.8 Z M88.6 503.8 L94 503 V508.8 H88.6 Z M82.8 509.6 H87.8 V514.5 L82.8 513.8 Z M88.6 509.6 H94 V515.3 L88.6 514.6 Z"/>
  </g>
  <circle cx="116.8" cy="507.4" r="3.4" fill="none" stroke="#3a3a3a" stroke-width="1"/>
  <path d="M114.4 509.9 L111 513.3" stroke="#3a3a3a" stroke-width="1.1"/>
  <!-- task view -->
  <g fill="none" stroke="#e8e8e8" stroke-width="1.1">
    <rect x="294" y="506.3" width="6.5" height="5"/>
    <path d="M293 504.5 H301.5 M293 513.2 H301.5 M303 504 V505.5 M303 507.3 V510.7 M303 512.5 V514"/>
  </g>
  <!-- explorer -->
  <path d="M323 504 H328.5 L330 505.5 H336.8 V514.8 H323 Z" fill="#f0c64a"/>
  <rect x="323" y="506.5" width="13.8" height="8.3" fill="#f8d775"/>
  <rect x="326" y="509.5" width="7.8" height="2.6" fill="#3aa3b7"/>
  <rect x="316.8" y="519.8" width="26.4" height="1.4" fill="#8fb0d2"/>
  <!-- premiere -->
  <rect x="354.3" y="502.3" width="12.7" height="12.5" fill="#1f0a33" stroke="#9a5fe0" stroke-width="1"/>
  <text x="356.2" y="512.2" font-family="Liberation Sans" font-size="7.5" font-weight="bold" fill="#d59bff">Pr</text>
  <!-- after effects -->
  <rect x="384.8" y="502.3" width="12.7" height="12.5" fill="#1a0d33" stroke="#8a7bdc" stroke-width="1"/>
  <text x="386" y="512.2" font-family="Liberation Sans" font-size="7.5" font-weight="bold" fill="#b6a8ff">Ae</text>
  <!-- chrome -->
  <circle cx="422" cy="509" r="7.3" fill="#db4437"/>
  <path d="M422 509 L428.3 505.35 A7.3 7.3 0 0 1 418.35 515.3 Z" fill="#f4c20d"/>
  <path d="M422 509 L418.35 515.3 A7.3 7.3 0 0 1 415.7 505.35 Z" fill="#0f9d58"/>
  <path d="M415.68 505.35 A7.3 7.3 0 0 1 428.32 505.35 L422 505.35 Z" fill="#db4437"/>
  <circle cx="422" cy="509" r="3.4" fill="#fff"/><circle cx="422" cy="509" r="2.6" fill="#4285f4"/>
  <!-- cinema 4d -->
  <circle cx="452.5" cy="509" r="6.8" fill="#e6e6ff"/>
  <circle cx="452.5" cy="509" r="5.4" fill="#1a1f5a"/>
  <circle cx="454" cy="510" r="3.3" fill="#5a63b8"/>
  <!-- audition -->
  <rect x="476.5" y="502.5" width="13" height="13" fill="#00261c" stroke="#2cc38f" stroke-width="1"/>
  <text x="478" y="512.4" font-family="Liberation Sans" font-size="7.5" font-weight="bold" fill="#3de0a8">Au</text>
  <!-- photoshop active -->
  <rect x="498.4" y="496" width="30.4" height="25" fill="#3b3b3d"/>
  <rect x="507" y="502.5" width="13" height="13" fill="#001d33" stroke="#2a9fd8" stroke-width="1"/>
  <text x="508.5" y="512.4" font-family="Liberation Sans" font-size="7.5" font-weight="bold" fill="#31a8ff">Ps</text>
  <rect x="498.4" y="519.8" width="30.4" height="1.4" fill="#8fb0d2"/>
  <!-- utorrent -->
  <circle cx="544" cy="509" r="7.5" fill="#78c043"/>
  <path d="M541 505 V510 Q541 513 544 513 Q547 513 547 510 V505" fill="none" stroke="#fff" stroke-width="1.8"/>
  <rect x="531.2" y="519.8" width="25.6" height="1.4" fill="#8fb0d2"/>
  <!-- notepad-ish -->
  <rect x="569.2" y="502.2" width="11.2" height="12.8" fill="#e8eef6"/>
  <rect x="569.2" y="502.2" width="11.2" height="3" fill="#7fa7d8"/>
  <rect x="571" y="507" width="5" height="4" fill="#c8b890"/>
  <rect x="562" y="519.8" width="25.6" height="1.4" fill="#8fb0d2"/>
  <!-- illustrator -->
  <rect x="599" y="502.5" width="12.7" height="13" fill="#2a1200" stroke="#d98a2a" stroke-width="1"/>
  <text x="601" y="512.4" font-family="Liberation Sans" font-size="7.5" font-weight="bold" fill="#ff9a00">Ai</text>
  <rect x="592.9" y="519.8" width="25.1" height="1.4" fill="#8fb0d2"/>
  <!-- obs -->
  <circle cx="635.6" cy="508.2" r="6.2" fill="none" stroke="#d8d8d8" stroke-width="1.2"/>
  <circle cx="633.5" cy="506" r="1.5" fill="#d8d8d8"/><circle cx="637.5" cy="507" r="1.2" fill="#d8d8d8"/>
  <circle cx="640.4" cy="513" r="3" fill="#e8121a"/>
  <rect x="623.3" y="519.8" width="25.1" height="1.4" fill="#8fb0d2"/>
  <!-- keyboard -->
  <rect x="680.5" y="507" width="9.5" height="5.5" fill="#d0d0d0"/>
  <path d="M682 506.5 L688 504.5" stroke="#d0d0d0" stroke-width="1"/>
  <path d="M682 509 H689 M682 511 H689" stroke="#555" stroke-width="0.5"/>
  <!-- weather -->
  <defs><linearGradient id="wg" x1="0" y1="0" x2="0" y2="1"><stop offset="0" stop-color="#ffd24a"/><stop offset="1" stop-color="#ee8a28"/></linearGradient></defs>
  <circle cx="725.6" cy="508.6" r="6.8" fill="url(#wg)"/>
  <path d="M718 505.5 H732 M717 508 H733.5 M718 510.5 H732.5 M719.5 513 H731" stroke="#f5e0b8" stroke-width="0.9"/>
  <!-- chevron up -->
  <path d="M767.5 510.3 L771.2 506.3 L774.9 510.3" fill="none" stroke="#e0e0e0" stroke-width="1.1"/>
  <!-- camera -->
  <rect x="782.8" y="505.5" width="6.5" height="6" fill="none" stroke="#dcdcdc" stroke-width="1.1"/>
  <path d="M784 503.5 H788 M784 513.8 H788" stroke="#aaa" stroke-width="0.9"/>
  <!-- mic -->
  <rect x="798.6" y="503" width="4.6" height="7.8" rx="2.3" fill="#e8e8e8"/>
  <path d="M797 509.5 Q797 512.5 800.9 512.5 Q804.8 512.5 804.8 509.5 M800.9 512.5 V515" fill="none" stroke="#e8e8e8" stroke-width="0.9"/>
  <!-- battery -->
  <rect x="812.5" y="507" width="8.3" height="5" fill="#e0e0e0"/>
  <rect x="811.2" y="505" width="2" height="3" fill="#e0e0e0"/>
  <!-- globe -->
  <circle cx="830.4" cy="508.6" r="5.3" fill="none" stroke="#e0e0e0" stroke-width="1"/>
  <ellipse cx="830.4" cy="508.6" rx="2.3" ry="5.3" fill="none" stroke="#e0e0e0" stroke-width="0.8"/>
  <path d="M825.3 506.8 H835.5 M825.3 510.4 H835.5" stroke="#e0e0e0" stroke-width="0.8"/>
  <!-- speaker -->
  <path d="M841 506.5 H843 L845.8 504 V513.5 L843 511 H841 Z" fill="none" stroke="#e0e0e0" stroke-width="0.9"/>
  <path d="M847.5 506.5 Q848.6 508.7 847.5 511 M849.6 505 Q851.4 508.7 849.6 512.5" fill="none" stroke="#e0e0e0" stroke-width="0.9"/>
  <!-- notification -->
  <path d="M900.5 504 H911 V512 H907.5 L905.8 514 L904 512 H900.5 Z" fill="none" stroke="#e8e8e8" stroke-width="1"/>
  <rect x="924" y="496" width="0.8" height="25" fill="#8a8a8a"/>
</svg>
<div class="t" style="left:129.2px;top:505.5px;font-size:9px;color:#5a5a5a">Type here to search</div>
<div class="t" style="left:666px;top:504px;font-size:7.8px;-webkit-text-stroke:0.2px #eee;color:#e8e8e8">EN</div>
<div class="t" style="left:737.6px;top:504.5px;font-size:8.5px;-webkit-text-stroke:0.2px #eee;color:#ececec">26°C</div>
<div class="t" style="left:860.3px;top:499.5px;font-size:7.6px;-webkit-text-stroke:0.2px #eee;color:#ececec">7:02 PM</div>
<div class="t" style="left:857.2px;top:510.5px;font-size:7.4px;-webkit-text-stroke:0.2px #eee;color:#ececec">2/26/2023</div>

</body></html>
